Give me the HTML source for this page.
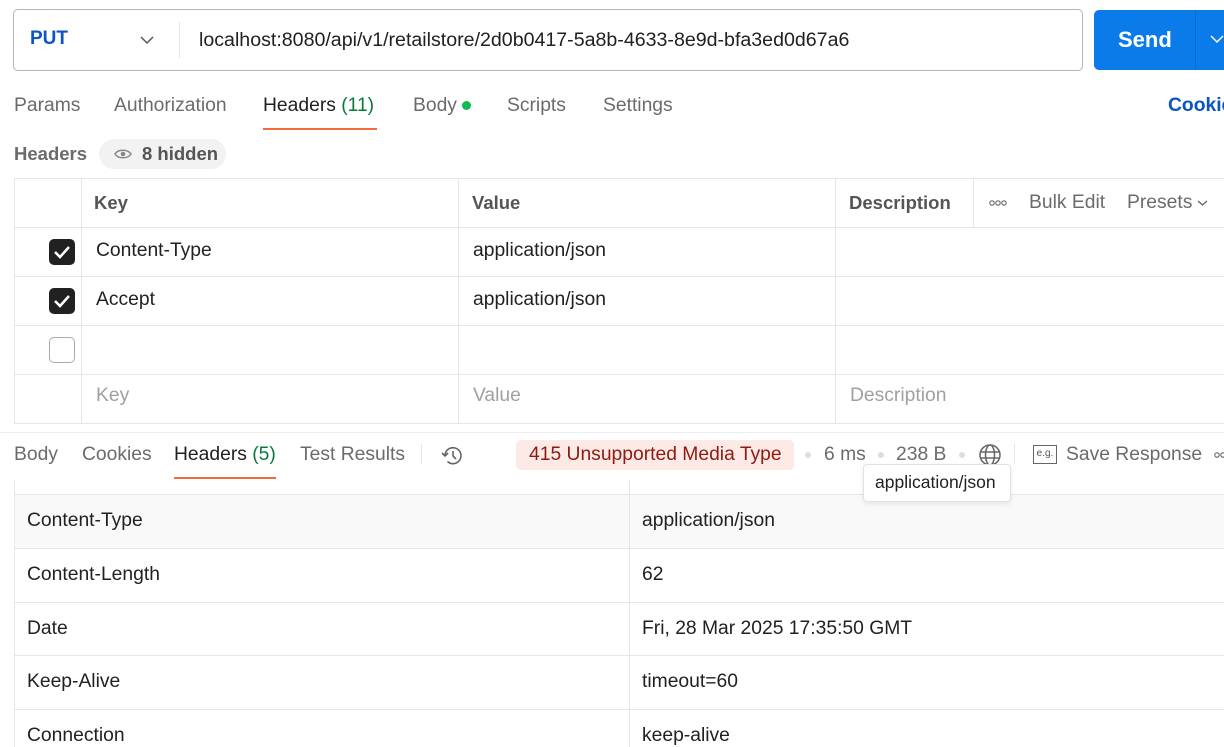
<!DOCTYPE html><html><head><style>
*{box-sizing:border-box;margin:0;padding:0}
body{width:1224px;height:747px;overflow:hidden;background:#fff;font-family:"Liberation Sans",sans-serif;color:#212121;font-size:19.3px;position:relative}
.a{position:absolute;white-space:nowrap}
.g{color:#6b6b6b}
.hl{position:absolute;background:#e6e6e6;height:1px}
.vl{position:absolute;background:#e6e6e6;width:1px}
.cb{position:absolute;left:49px;width:26px;height:26px;border-radius:5px;background:#212121}
.cb svg{position:absolute;left:4px;top:5px}
</style></head><body>
<div class="a" style="left:13px;top:9px;width:1070px;height:62px;border:1px solid #b5b5b5;border-radius:5px"></div>
<div class="a" style="left:30px;top:28px;font-weight:bold;color:#0b55c4;font-size:19px">PUT</div>
<svg class="a" style="left:140px;top:35px" width="14" height="10"><path d="M1 2l6 6 6-6" stroke="#555" stroke-width="1.5" fill="none"/></svg>
<div class="vl" style="left:179px;top:22px;height:36px"></div>
<div class="a" style="left:199px;top:29px;font-size:19.6px">localhost:8080/api/v1/retailstore/2d0b0417-5a8b-4633-8e9d-bfa3ed0d67a6</div>
<div class="a" style="left:1094px;top:10px;width:140px;height:60px;background:#0c7bea;border-radius:5px"></div>
<div class="a" style="left:1118px;top:27px;color:#fff;font-weight:bold;font-size:22px">Send</div>
<div class="a" style="left:1195px;top:10px;width:1px;height:60px;background:#0a68c6"></div>
<svg class="a" style="left:1210px;top:34px" width="14" height="10"><path d="M1 2l6 6 6-6" stroke="#fff" stroke-width="1.5" fill="none"/></svg>

<div class="a g" style="left:14px;top:95px">Params</div>
<div class="a g" style="left:114px;top:95px">Authorization</div>
<div class="a" style="left:263px;top:95px">Headers <span style="color:#0a7a3a">(11)</span></div>
<div class="a" style="left:263px;top:128px;width:114px;height:2px;background:#f26b3a"></div>
<div class="a g" style="left:413px;top:95px">Body</div>
<div class="a" style="left:462px;top:101px;width:9px;height:9px;border-radius:50%;background:#0cbb52"></div>
<div class="a g" style="left:507px;top:95px">Scripts</div>
<div class="a g" style="left:603px;top:95px">Settings</div>
<div class="a" style="left:1168px;top:95px;color:#0b55c4;font-weight:bold">Cookies</div>

<div class="a g" style="left:14px;top:143px;font-weight:bold;font-size:18.5px">Headers</div>
<div class="a" style="left:99px;top:139px;width:127px;height:30px;border-radius:15px;background:#f2f2f2"></div>
<svg class="a" style="left:114px;top:148px" width="18" height="12"><path d="M1 6C4 1 14 1 17 6C14 11 4 11 1 6Z" fill="none" stroke="#888" stroke-width="1.4"/><circle cx="9" cy="6" r="2.3" fill="#888"/></svg>
<div class="a g" style="left:142px;top:143px;font-weight:bold;color:#555;font-size:18.5px">8 hidden</div>

<div class="a" style="left:14px;top:178px;width:1220px;height:246px;border:1px solid #e6e6e6"></div>
<div class="hl" style="left:14px;top:227px;width:1210px"></div>
<div class="hl" style="left:14px;top:276px;width:1210px"></div>
<div class="hl" style="left:14px;top:325px;width:1210px"></div>
<div class="hl" style="left:14px;top:374px;width:1210px"></div>
<div class="vl" style="left:81px;top:178px;height:246px"></div>
<div class="vl" style="left:458px;top:178px;height:246px"></div>
<div class="vl" style="left:835px;top:178px;height:246px"></div>
<div class="vl" style="left:973px;top:178px;height:49px"></div>
<div class="a" style="left:94px;top:192px;font-weight:bold;color:#555;font-size:18.5px">Key</div>
<div class="a" style="left:472px;top:192px;font-weight:bold;color:#555;font-size:18.5px">Value</div>
<div class="a" style="left:849px;top:192px;font-weight:bold;color:#555;font-size:18.5px">Description</div>
<svg class="a" style="left:989px;top:199px" width="18" height="8"><circle cx="3" cy="4" r="2.2" fill="none" stroke="#666" stroke-width="1.1"/><circle cx="9" cy="4" r="2.2" fill="none" stroke="#666" stroke-width="1.1"/><circle cx="15" cy="4" r="2.2" fill="none" stroke="#666" stroke-width="1.1"/></svg>
<div class="a g" style="left:1029px;top:192px">Bulk Edit</div>
<div class="a g" style="left:1127px;top:192px">Presets</div>
<svg class="a" style="left:1197px;top:199px" width="11" height="8"><path d="M1 2l4.5 4 4.5-4" stroke="#666" stroke-width="1.3" fill="none"/></svg>
<div class="cb" style="top:239px"><svg width="18" height="16"><path d="M2 8l5 5 9-10" stroke="#fff" stroke-width="2.5" fill="none"/></svg></div>
<div class="a" style="left:96px;top:240px">Content-Type</div>
<div class="a" style="left:473px;top:240px">application/json</div>
<div class="cb" style="top:288px"><svg width="18" height="16"><path d="M2 8l5 5 9-10" stroke="#fff" stroke-width="2.5" fill="none"/></svg></div>
<div class="a" style="left:96px;top:289px">Accept</div>
<div class="a" style="left:473px;top:289px">application/json</div>
<div class="a" style="left:49px;top:337px;width:26px;height:26px;border-radius:5px;border:1px solid #aaa"></div>
<div class="a" style="left:96px;top:385px;color:#a0a0a0">Key</div>
<div class="a" style="left:473px;top:385px;color:#a0a0a0">Value</div>
<div class="a" style="left:850px;top:385px;color:#a0a0a0">Description</div>

<div class="hl" style="left:0;top:432px;width:1224px;background:#eee"></div>
<div class="a g" style="left:14px;top:444px">Body</div>
<div class="a g" style="left:82px;top:444px">Cookies</div>
<div class="a" style="left:174px;top:444px">Headers <span style="color:#0a7a3a">(5)</span></div>
<div class="a" style="left:174px;top:477px;width:102px;height:2px;background:#f26b3a"></div>
<div class="a g" style="left:300px;top:444px">Test Results</div>
<div class="vl" style="left:421px;top:444px;height:20px"></div>
<svg class="a" style="left:440px;top:443px" width="25" height="25"><path d="M5 12.5A8 8 0 1 1 7.5 18.5" fill="none" stroke="#666" stroke-width="1.6"/><path d="M2 10l3 3 3-3" fill="none" stroke="#666" stroke-width="1.6"/><path d="M13 8v5l3 3" fill="none" stroke="#666" stroke-width="1.6"/></svg>
<div class="a" style="left:516px;top:440px;width:278px;height:30px;border-radius:5px;background:#fdeae7"></div>
<div class="a" style="left:529px;top:444px;color:#8e1a10">415 Unsupported Media Type</div>
<div class="a" style="left:805px;top:452px;width:6px;height:6px;border-radius:50%;background:#ddd"></div>
<div class="a g" style="left:824px;top:444px">6 ms</div>
<div class="a" style="left:878px;top:452px;width:6px;height:6px;border-radius:50%;background:#ddd"></div>
<div class="a g" style="left:896px;top:444px">238 B</div>
<div class="a" style="left:959px;top:452px;width:6px;height:6px;border-radius:50%;background:#ddd"></div>
<svg class="a" style="left:978px;top:443px" width="24" height="24"><circle cx="12" cy="12" r="10" fill="none" stroke="#666" stroke-width="1.5"/><ellipse cx="12" cy="12" rx="4.5" ry="10" fill="none" stroke="#666" stroke-width="1.5"/><path d="M2.5 9h19M2.5 15h19" stroke="#666" stroke-width="1.5"/></svg>
<div class="vl" style="left:1014px;top:444px;height:20px"></div>
<div class="a" style="left:1033px;top:445px;width:24px;height:19px;border:1.5px solid #666;font-size:10px;color:#555;text-align:center;line-height:16px">e.g.</div>
<div class="a g" style="left:1066px;top:444px">Save Response</div>
<svg class="a" style="left:1214px;top:451px" width="14" height="8"><circle cx="3" cy="4" r="2.2" fill="none" stroke="#666" stroke-width="1.1"/><circle cx="9" cy="4" r="2.2" fill="none" stroke="#666" stroke-width="1.1"/></svg>

<div class="a" style="left:14px;top:494px;width:1220px;height:54px;background:#f9f9f9"></div>
<div class="vl" style="left:14px;top:480px;height:267px"></div>
<div class="vl" style="left:629px;top:480px;height:267px"></div>
<div class="hl" style="left:14px;top:494px;width:1210px"></div>
<div class="hl" style="left:14px;top:548px;width:1210px"></div>
<div class="hl" style="left:14px;top:602px;width:1210px"></div>
<div class="hl" style="left:14px;top:655px;width:1210px"></div>
<div class="hl" style="left:14px;top:709px;width:1210px"></div>
<div class="a" style="left:27px;top:510px">Content-Type</div><div class="a" style="left:642px;top:510px">application/json</div>
<div class="a" style="left:27px;top:564px">Content-Length</div><div class="a" style="left:642px;top:564px">62</div>
<div class="a" style="left:27px;top:618px">Date</div><div class="a" style="left:642px;top:618px">Fri, 28 Mar 2025 17:35:50 GMT</div>
<div class="a" style="left:27px;top:671px">Keep-Alive</div><div class="a" style="left:642px;top:671px">timeout=60</div>
<div class="a" style="left:27px;top:725px">Connection</div><div class="a" style="left:642px;top:725px">keep-alive</div>

<div class="a" style="left:863px;top:464px;width:148px;height:38px;background:#fff;border:1px solid #e2e2e2;border-radius:4px;box-shadow:0 2px 6px rgba(0,0,0,.08)"></div>
<div class="a" style="left:875px;top:472px;font-size:17.5px">application/json</div>
</body></html>
